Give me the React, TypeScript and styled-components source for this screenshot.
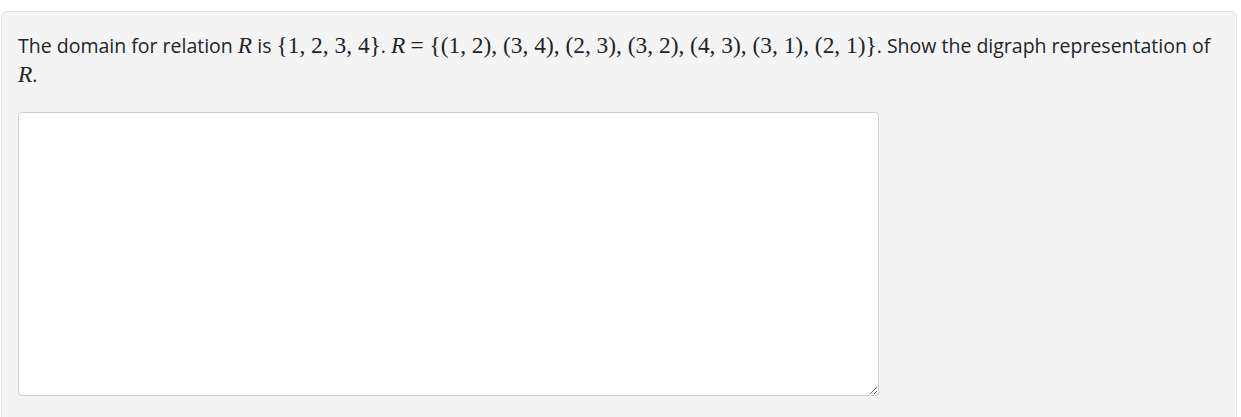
import styled, { createGlobalStyle } from "styled-components";

const GlobalStyle = createGlobalStyle`
  body {
    margin: 0;
    background: #ffffff;
  }
`;

const Card = styled.div`
  margin: 11px 4px 0 1px;
  min-height: 420px;
  box-sizing: border-box;
  background: #f4f4f4;
  border: 1px solid #e4e4e4;
  border-radius: 6px;
  padding: 19px 16px 16px 16px;
`;

const Question = styled.p`
  margin: 0;
  font-family: "Open Sans", "Noto Sans", sans-serif;
  font-size: 19.5px;
  line-height: 29px;
  color: #212529;
`;

const Math = styled.span<{ $italic?: boolean }>`
  font-family: "Liberation Serif", "DejaVu Serif", serif;
  font-size: 1.2em;
  font-style: ${({ $italic }) => ($italic ? "italic" : "normal")};
`;

const Answer = styled.textarea`
  display: block;
  margin-top: 23px;
  width: 861px;
  height: 284px;
  box-sizing: border-box;
  background: #ffffff;
  border: 1px solid #cfcfcf;
  border-radius: 4px;
  padding: 6px 10px;
  font-family: "Open Sans", sans-serif;
  font-size: 16px;
  outline: none;
`;

export default function App() {
  return (
    <>
      <GlobalStyle />
      <Card>
        <Question>
          The domain for relation <Math $italic>R</Math> is{" "}
          <Math>{"{1, 2, 3, 4}"}</Math>. <Math $italic>R</Math>{" "}
          <Math>
            = {"{(1, 2), (3, 4), (2, 3), (3, 2), (4, 3), (3, 1), (2, 1)}"}
          </Math>
          . Show the digraph representation of <Math $italic>R</Math>.
        </Question>
        <Answer />
      </Card>
    </>
  );
}
